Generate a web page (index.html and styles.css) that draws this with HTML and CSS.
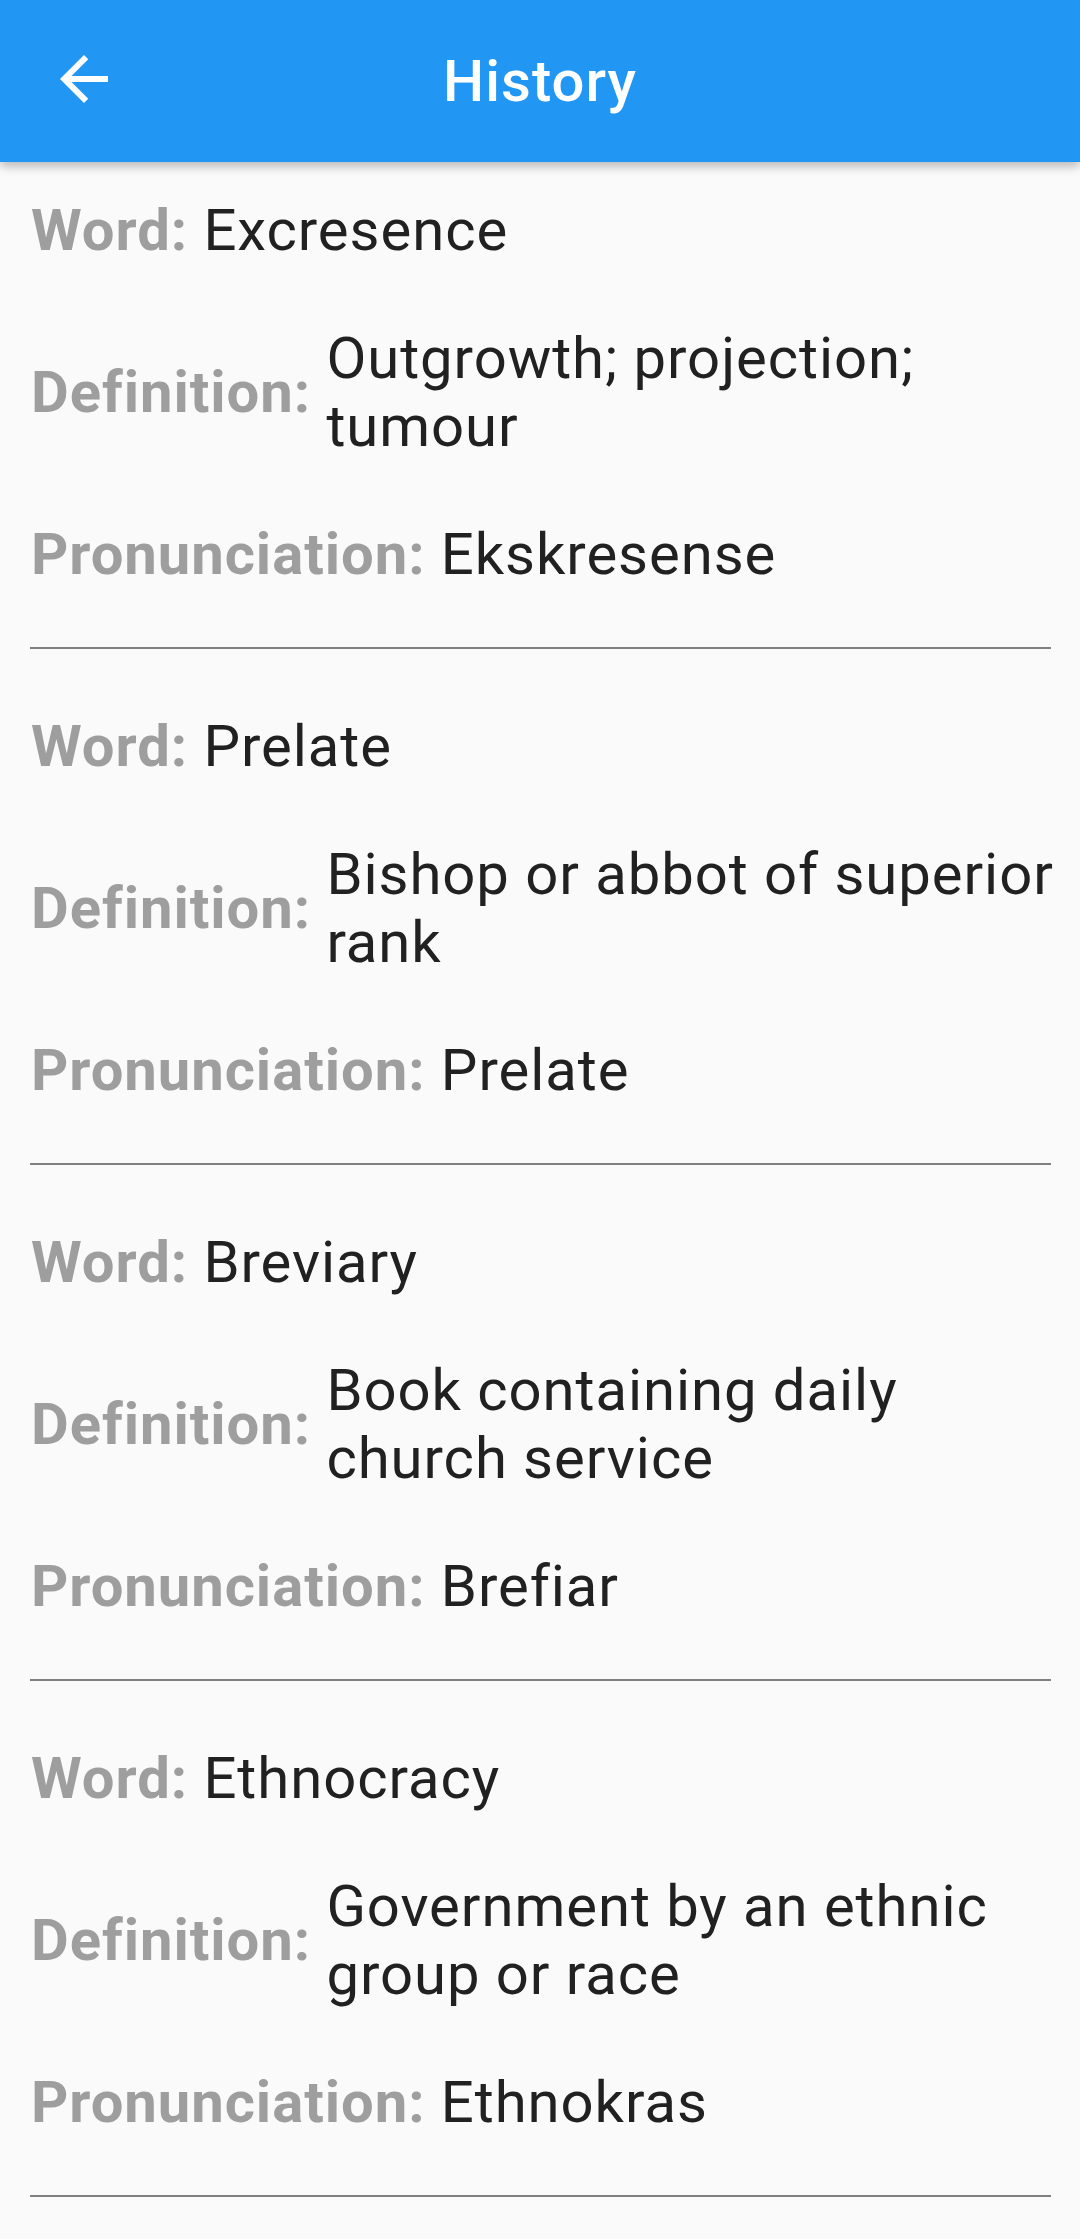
FILE: index.html
```html
<!DOCTYPE html>
<html lang="en">
<head>
    <meta charset="UTF-8">
    <title>History</title>
    <link rel="stylesheet" href="styles.css">
</head>
<body>
    <!-- App Bar -->
    <header class="app-bar">
        <button class="back-btn" aria-label="Back">
            <svg viewBox="0 0 24 24" width="72" height="72"><path d="M20 11H7.83l5.59-5.59L12 4l-8 8 8 8 1.41-1.41L7.83 13H20v-2z" fill="#fff"/></svg>
        </button>
        <h1 class="title">History</h1>
    </header>

    <!-- History List -->
    <main class="history-list">
        <div class="entry">
            <div class="row"><span class="label">Word: </span><span class="value">Excresence</span></div>
            <div class="row"><span class="label">Definition: </span><span class="value">Outgrowth; projection; tumour</span></div>
            <div class="row"><span class="label">Pronunciation: </span><span class="value">Ekskresense</span></div>
            <hr>
        </div>
        <div class="entry">
            <div class="row"><span class="label">Word: </span><span class="value">Prelate</span></div>
            <div class="row"><span class="label">Definition: </span><span class="value">Bishop or abbot of superior rank</span></div>
            <div class="row"><span class="label">Pronunciation: </span><span class="value">Prelate</span></div>
            <hr>
        </div>
        <div class="entry">
            <div class="row"><span class="label">Word: </span><span class="value">Breviary</span></div>
            <div class="row"><span class="label">Definition: </span><span class="value">Book containing daily church service</span></div>
            <div class="row"><span class="label">Pronunciation: </span><span class="value">Brefiar</span></div>
            <hr>
        </div>
        <div class="entry">
            <div class="row"><span class="label">Word: </span><span class="value">Ethnocracy</span></div>
            <div class="row"><span class="label">Definition: </span><span class="value">Government by an ethnic group or race</span></div>
            <div class="row"><span class="label">Pronunciation: </span><span class="value">Ethnokras</span></div>
            <hr>
        </div>
    </main>
</body>
</html>
```

FILE: styles.css
```css
body { margin: 0; background-color: #fafafa; font-family: Roboto, "Noto Sans", sans-serif; color: #212121; }

/* --- App Bar --- */
.app-bar { position: relative; z-index: 1; height: 162px; background-color: #2196f3; display: flex; align-items: center; justify-content: center; box-shadow: 0 4px 10px rgba(0,0,0,0.28); }
.back-btn { position: absolute; left: 48px; top: 43px; width: 72px; height: 72px; padding: 0; border: none; background: none; cursor: pointer; }
.back-btn svg { display: block; }
.title { margin: 0; color: white; font-size: 58px; font-weight: 500; line-height: 68px; letter-spacing: 1px; }

/* --- List --- */
.history-list { padding: 4px 29px 0 31px; }
.row { display: flex; align-items: center; padding: 30px 0; font-size: 58px; line-height: 68px; letter-spacing: 0.95px; }
.label { color: #9e9e9e; font-weight: bold; white-space: pre; flex-shrink: 0; }
.value { flex: 1; margin-right: -6px; }
hr { border: 0; border-top: 2px solid #808080; margin: 29px 0 33px -1px; }
```
